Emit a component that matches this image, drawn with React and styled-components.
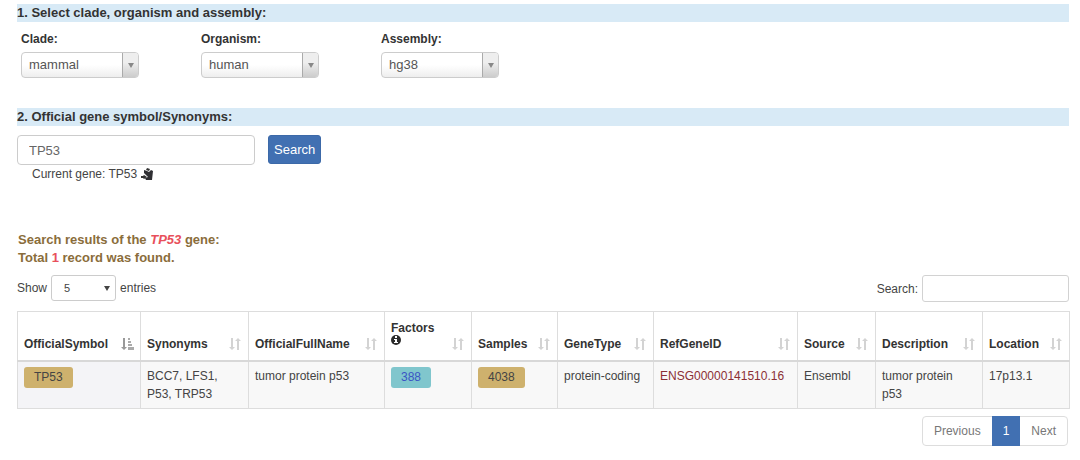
import React, { useState } from 'react';
import styled, { createGlobalStyle } from 'styled-components';

const GlobalStyles = createGlobalStyle`
  *,
  *::before,
  *::after {
    box-sizing: border-box;
  }
  body {
    margin: 0;
    background-color: #fff;
    color: #444;
    font-family: "Liberation Sans", Arial, sans-serif;
    font-size: 12px;
    line-height: 18px;
  }
  button,
  input,
  select {
    font-family: inherit;
    color: inherit;
  }
`;

const PageStyles = styled.main`
  padding: 4px 11px 14px 17px;
`;

const StepHeading = styled.h2`
  margin: 0;
  background-color: #d8eaf6;
  color: #333;
  font-size: 13px;
  line-height: 18px;
  label {
    display: block;
  }
`;

const Pickers = styled.div`
  display: flex;
  gap: 62px;
  padding: 8px 4px 30px;
`;

const Picker = styled.label`
  display: flex;
  flex-direction: column;
  gap: 4px;
  color: #333;
  font-weight: bold;
`;

const SelectBox = styled.span`
  position: relative;
  display: inline-flex;
  select {
    appearance: none;
    outline: none;
    cursor: pointer;
  }
  svg {
    pointer-events: none;
  }
`;

const PickerBox = styled(SelectBox)`
  width: 118px;
  height: 26px;
  border: 1px solid #ccc;
  border-radius: 4px;
  overflow: hidden;
  background: linear-gradient(to top, #eee 0%, #fff 50%);
  select {
    width: 100%;
    padding: 0 24px 2px 7px;
    border: 0;
    background: none;
    color: #555;
    font-size: 13px;
  }
  .arrow {
    position: absolute;
    top: 0;
    right: 0;
    bottom: 0;
    width: 16px;
    display: flex;
    align-items: center;
    justify-content: center;
    border-left: 1px solid #aaa;
    background: linear-gradient(to top, #ccc 0%, #eee 60%);
    pointer-events: none;
  }
`;

const SearchForm = styled.form`
  display: flex;
  gap: 13px;
  padding-top: 9px;
`;

const GeneInput = styled.input`
  width: 238px;
  height: 30px;
  padding: 0 11px;
  border: 1px solid #ccc;
  border-radius: 4px;
  font-size: 13px;
  color: #666;
`;

const SearchButton = styled.button`
  height: 29px;
  padding: 0 5px;
  border: 1px solid #3c69a8;
  border-radius: 3px;
  background-color: #4170b2;
  color: #fff;
  font-size: 13px;
  cursor: pointer;
`;

const CurrentGene = styled.p`
  display: flex;
  align-items: center;
  gap: 4px;
  margin: 0;
  padding: 0 15px;
`;

const Summary = styled.p`
  margin: 0;
  padding: 48px 1px 8px;
  color: #8a6d3b;
  font-size: 13px;
  font-weight: bold;
  line-height: 18px;
  em,
  b {
    color: #e8505b;
  }
`;

const TableTools = styled.div`
  display: flex;
  justify-content: space-between;
  align-items: flex-start;
  margin-bottom: 9px;
  label {
    display: flex;
    align-items: center;
    gap: 4px;
  }
`;

const LengthBox = styled(SelectBox)`
  select {
    width: 65px;
    height: 26px;
    padding: 0 12px;
    border: 1px solid #ccc;
    border-radius: 3px;
    background-color: #fff;
    font-size: 11px;
  }
  svg {
    position: absolute;
    top: 10px;
    right: 6px;
  }
`;

const FilterInput = styled.input`
  width: 147px;
  height: 27px;
  padding: 0 9px;
  border: 1px solid #d2d2d2;
  border-radius: 3px;
  font-size: 12px;
`;

const ResultTable = styled.table`
  width: 100%;
  table-layout: fixed;
  border-collapse: collapse;
  border: 1px solid #ddd;
  th,
  td {
    border: 1px solid #ddd;
    text-align: left;
  }
  th {
    height: 49px;
    padding: 6px 6px 7px;
    border-bottom: 2px solid #d8d8d8;
    color: #333;
    vertical-align: bottom;
    line-height: 17px;
  }
  td {
    padding: 5px 8px 5px 6px;
    background-color: #f8f8f8;
    vertical-align: top;
  }
  td:first-child {
    background-color: #f4f4f7;
  }
  a {
    color: #8b2f35;
    text-decoration: none;
  }
`;

const HeadCell = styled.div`
  display: flex;
  align-items: flex-end;
  justify-content: space-between;
  svg {
    flex: none;
  }
  > svg {
    margin-bottom: 2px;
  }
`;

const HeadText = styled.span`
  display: flex;
  flex-direction: column;
  align-items: flex-start;
  padding-bottom: ${(props) => (props.$stacked ? '8px' : '0')};
  line-height: ${(props) => (props.$stacked ? '14px' : '17px')};
`;

const Badge = styled.button`
  display: block;
  height: 21px;
  padding: 0 10px;
  border: 0;
  border-radius: 3px;
  background-color: ${(props) => (props.$blue ? '#80c6cd' : '#ceb16d')};
  color: ${(props) => (props.$blue ? '#3b55c4' : '#444')};
  font-size: 12px;
  cursor: pointer;
`;

const Pagination = styled.nav`
  display: flex;
  width: fit-content;
  margin: 7px 1px 0 auto;
  border: 1px solid #ddd;
  border-radius: 4px;
`;

const PageButton = styled.button`
  height: ${(props) => (props.$active ? '30px' : '28px')};
  margin: ${(props) => (props.$active ? '-1px 0' : '0')};
  padding: 0 11px;
  border: 0;
  background-color: ${(props) => (props.$active ? '#4170b2' : 'transparent')};
  && {
    color: ${(props) => (props.$active ? '#fff' : '#777')};
  }
  font-size: 12px;
  cursor: pointer;
`;

const pickers = [
  { name: 'Clade', value: 'mammal' },
  { name: 'Organism', value: 'human' },
  { name: 'Assembly', value: 'hg38' },
];

const columns = [
  { name: 'OfficialSymbol', width: 123, sorted: true },
  { name: 'Synonyms', width: 108 },
  { name: 'OfficialFullName', width: 136 },
  { name: 'Factors', width: 87, info: true },
  { name: 'Samples', width: 86 },
  { name: 'GeneType', width: 96 },
  { name: 'RefGeneID', width: 144 },
  { name: 'Source', width: 78 },
  { name: 'Description', width: 107 },
  { name: 'Location', width: 87 },
];

function Caret({ color = '#888' }) {
  return (
    <svg width="6" height="6" viewBox="0 0 6 6" aria-hidden="true">
      <path d="M0 1h6L3 6z" fill={color} />
    </svg>
  );
}

function SortIcon({ sorted }) {
  return (
    <svg width="13" height="14" viewBox="0 0 13 14" aria-hidden="true">
      <path
        d="M2 1h2v9h2L3 13 0 10h2z"
        fill={sorted ? '#999' : '#d3d3d3'}
      />
      {sorted ? (
        <path
          d="M7 1h2v2H7zM7 4h3v2H7zM7 7h4v2H7zM7 10h6v3H7z"
          fill="#aaa"
        />
      ) : (
        <path d="M8 13h2V4h2L9 1 6 4h2z" fill="#d3d3d3" />
      )}
    </svg>
  );
}

function InfoIcon() {
  return (
    <svg width="10" height="10" viewBox="0 0 10 10" aria-hidden="true">
      <circle cx="5" cy="5" r="5" fill="#2b2b2b" />
      <path d="M4 1h2v2H4zM3 4h3v3h1v1H3V7h1V5H3z" fill="#fff" />
    </svg>
  );
}

// tilted clipboard with a small arrow coming in from the left
function PasteIcon() {
  return (
    <svg width="12" height="12" viewBox="0 0 12 12" aria-hidden="true">
      <path d="M3 2l3 1 2 1 2-2 2 1-1 9H5l-1-2 3-1-4-4z" fill="#2f2f33" />
      <path d="M6 0l3 1-1 2-3-1z" fill="#333" />
      <path d="M0 8h2l1-1 3 2-3 2-1-1H0z" fill="#333" />
    </svg>
  );
}

export default function App() {
  const [gene, setGene] = useState('TP53');
  const [filter, setFilter] = useState('');

  return (
    <PageStyles>
      <GlobalStyles />
      <StepHeading>1. Select clade, organism and assembly:</StepHeading>
      <Pickers>
        {pickers.map((item) => (
          <Picker key={item.name}>
            {item.name}:
            <PickerBox>
              <select defaultValue={item.value}>
                <option>{item.value}</option>
              </select>
              <span className="arrow">
                <Caret />
              </span>
            </PickerBox>
          </Picker>
        ))}
      </Pickers>

      <StepHeading>
        <label htmlFor="gene">2. Official gene symbol/Synonyms:</label>
      </StepHeading>
      <SearchForm onSubmit={(e) => e.preventDefault()}>
        <GeneInput
          id="gene"
          value={gene}
          onChange={(e) => setGene(e.target.value)}
        />
        <SearchButton type="submit">Search</SearchButton>
      </SearchForm>
      <CurrentGene>
        Current gene: TP53
        <PasteIcon />
      </CurrentGene>

      <Summary>
        Search results of the <em>TP53</em> gene:
        <br />
        Total <b>1</b> record was found.
      </Summary>

      <TableTools>
        <label>
          Show
          <LengthBox>
            <select defaultValue="5">
              <option>5</option>
              <option>10</option>
              <option>25</option>
            </select>
            <Caret color="#444" />
          </LengthBox>
          entries
        </label>
        <label>
          Search:
          <FilterInput
            value={filter}
            onChange={(e) => setFilter(e.target.value)}
          />
        </label>
      </TableTools>

      <ResultTable>
        <colgroup>
          {columns.map((col) => (
            <col key={col.name} width={col.width} />
          ))}
        </colgroup>
        <thead>
          <tr>
            {columns.map((col) => (
              <th key={col.name} scope="col">
                <HeadCell>
                  <HeadText $stacked={col.info}>
                    {col.name}
                    {col.info && <InfoIcon />}
                  </HeadText>
                  <SortIcon sorted={col.sorted} />
                </HeadCell>
              </th>
            ))}
          </tr>
        </thead>
        <tbody>
          <tr>
            <td>
              <Badge type="button">TP53</Badge>
            </td>
            <td>BCC7, LFS1, P53, TRP53</td>
            <td>tumor protein p53</td>
            <td>
              <Badge type="button" $blue>
                388
              </Badge>
            </td>
            <td>
              <Badge type="button">4038</Badge>
            </td>
            <td>protein-coding</td>
            <td>
              <a href="#ENSG00000141510">ENSG00000141510.16</a>
            </td>
            <td>Ensembl</td>
            <td>tumor protein p53</td>
            <td>17p13.1</td>
          </tr>
        </tbody>
      </ResultTable>

      <Pagination aria-label="Result pages">
        <PageButton type="button">Previous</PageButton>
        <PageButton type="button" $active>
          1
        </PageButton>
        <PageButton type="button">Next</PageButton>
      </Pagination>
    </PageStyles>
  );
}
